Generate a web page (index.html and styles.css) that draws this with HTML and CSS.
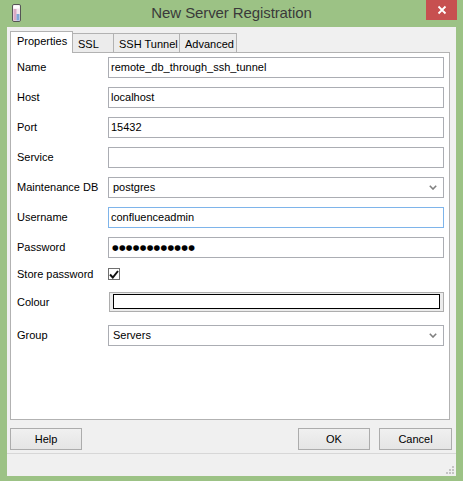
FILE: index.html
```html
<!DOCTYPE html>
<html>
<head>
<meta charset="utf-8">
<title>New Server Registration</title>
<link rel="stylesheet" href="styles.css">
</head>
<body>
<div class="window">
  <div class="titlebar">
    <div class="app-icon">
      <svg width="9" height="18" viewBox="0 0 9 18">
        <rect x="0.5" y="0.5" width="8" height="17" rx="1.5" fill="#f2e6ee" stroke="#555"/>
        <rect x="1.5" y="1.5" width="6" height="3" fill="#fff"/>
        <rect x="1.5" y="5" width="3" height="11.5" fill="#d9a9c4"/>
        <rect x="4.5" y="10" width="3" height="6.5" fill="#7fa6d6"/>
      </svg>
    </div>
    <div class="title">New Server Registration</div>
    <div class="close">
      <svg width="10" height="10" viewBox="0 0 10 10"><path d="M1.5 1.5 L8.5 8.5 M8.5 1.5 L1.5 8.5" stroke="#fff" stroke-width="1.8"/></svg>
    </div>
  </div>
  <div class="client">
    <div class="tabs">
      <div class="tab active tab-props">Properties</div>
      <div class="tab tab-ssl">SSL</div>
      <div class="tab tab-ssh">SSH Tunnel</div>
      <div class="tab tab-adv">Advanced</div>
    </div>
    <div class="panel">
      <div class="row">
        <label class="label">Name</label>
        <div class="field">remote_db_through_ssh_tunnel</div>
      </div>
      <div class="row">
        <label class="label">Host</label>
        <div class="field">localhost</div>
      </div>
      <div class="row">
        <label class="label">Port</label>
        <div class="field">15432</div>
      </div>
      <div class="row">
        <label class="label">Service</label>
        <div class="field"></div>
      </div>
      <div class="row">
        <label class="label">Maintenance DB</label>
        <div class="field select"><span>postgres</span>
          <svg class="chev" width="8" height="5" viewBox="0 0 8 5"><path d="M0.8 0.8 L4 4 L7.2 0.8" fill="none" stroke="#808080" stroke-width="1.6"/></svg>
        </div>
      </div>
      <div class="row">
        <label class="label">Username</label>
        <div class="field focused">confluenceadmin</div>
      </div>
      <div class="row">
        <label class="label">Password</label>
        <div class="field"><span class="dots">●●●●●●●●●●●●</span></div>
      </div>
      <div class="row row-check">
        <label class="label">Store password</label>
        <div class="checkbox">
          <svg width="10" height="9" viewBox="0 0 10 9"><path d="M1 4.5 L3.8 7.5 L9 1" fill="none" stroke="#111" stroke-width="2"/></svg>
        </div>
      </div>
      <div class="row row-colour">
        <label class="label">Colour</label>
        <div class="colour"><div class="swatch"></div></div>
      </div>
      <div class="row row-group">
        <label class="label">Group</label>
        <div class="field select"><span>Servers</span>
          <svg class="chev" width="8" height="5" viewBox="0 0 8 5"><path d="M0.8 0.8 L4 4 L7.2 0.8" fill="none" stroke="#808080" stroke-width="1.6"/></svg>
        </div>
      </div>
    </div>
    <div class="buttons">
      <button class="btn">Help</button>
      <div class="spacer"></div>
      <button class="btn">OK</button>
      <button class="btn btn-cancel">Cancel</button>
    </div>
    <div class="separator"></div>
    <div class="statusbar">
      <svg class="grip" width="9" height="9" viewBox="0 0 9 9">
        <rect x="7" y="1" width="2" height="2" fill="#c4c4c4"/>
        <rect x="4" y="4" width="2" height="2" fill="#c4c4c4"/>
        <rect x="7" y="4" width="2" height="2" fill="#c4c4c4"/>
        <rect x="1" y="7" width="2" height="2" fill="#c4c4c4"/>
        <rect x="4" y="7" width="2" height="2" fill="#c4c4c4"/>
        <rect x="7" y="7" width="2" height="2" fill="#c4c4c4"/>
      </svg>
    </div>
  </div>
</div>
</body>
</html>
```
FILE: styles.css
```css
* { box-sizing: border-box; }
html, body { margin: 0; padding: 0; }
body {
  background: #9cc285;
  font-family: "Liberation Sans", Arial, sans-serif;
  font-size: 11px;
  color: #000;
}
.window {
  width: 463px;
  height: 481px;
  display: flex;
  flex-direction: column;
}
.titlebar {
  height: 27px;
  display: grid;
  grid-template-columns: 1fr auto 1fr;
  align-items: start;
}
.app-icon {
  justify-self: start;
  margin: 4px 0 0 12px;
  height: 18px;
}
.app-icon svg { display: block; }
.title {
  font-size: 15px;
  line-height: 20px;
  padding-top: 3px;
  color: #3a3a3a;
  letter-spacing: -0.1px;
}
.close {
  justify-self: end;
  margin-right: 6px;
  width: 31px;
  height: 20px;
  background: #c75050;
  display: flex;
  align-items: center;
  justify-content: center;
}
.close svg { display: block; }
.client {
  flex: 1;
  margin: 0 7px 5px 7px;
  background: #f0f0f0;
  display: flex;
  flex-direction: column;
  padding: 4px 6px 0 3px;
}
.tabs {
  display: flex;
  align-items: flex-end;
  height: 21px;
  position: relative;
  z-index: 1;
}
.tab {
  height: 19px;
  border: 1px solid #b2b2b2;
  border-bottom: none;
  background: #ececec;
  padding: 4px 0 0 5px;
  line-height: 13px;
  white-space: nowrap;
}
.tab + .tab { border-left: none; }
.tab.active {
  height: 22px;
  margin-bottom: -1px;
  background: #fff;
  padding: 3px 0 0 6px;
}
.tab-props { width: 63px; }
.tab-ssl { width: 41px; }
.tab-ssh { width: 66px; }
.tab-adv { width: 57px; }
.panel {
  height: 368px;
  background: #fff;
  border: 1px solid #b2b2b2;
  padding: 4px 5px 0 6px;
  display: flex;
  flex-direction: column;
  gap: 9px;
}
.row {
  display: flex;
  align-items: center;
  height: 21px;
}
.label {
  width: 91px;
  flex: none;
  line-height: 13px;
}
.field {
  flex: 1;
  height: 21px;
  border: 1px solid #abadb3;
  background: #fff;
  padding: 0 2px;
  line-height: 19px;
  display: flex;
  align-items: center;
  white-space: nowrap;
}
.field.focused { border-color: #7eb4ea; }
.field.select { padding-left: 4px; }
.field.select span { flex: 1; }
.chev { display: block; margin-right: 4px; }
.dots {
  font-family: "DejaVu Sans", sans-serif;
  font-size: 7.6px;
  letter-spacing: 0.3px;
  padding-left: 1px;
}
.row-check { height: 16px; margin-top: -1px; }
.checkbox {
  width: 12px;
  height: 12px;
  border: 1px solid #6f6f6f;
  background: #fff;
  display: flex;
  align-items: center;
  justify-content: center;
}
.checkbox svg { display: block; }
.row-colour { height: 20px; margin-top: 1px; }
.colour {
  flex: 1;
  height: 20px;
  margin-left: 1px;
  border: 1px solid #adadad;
  background: #ececec;
  padding: 1px 3px 2px 3px;
}
.swatch {
  height: 100%;
  border: 1px solid #000;
  background: #fff;
}
.row-group { margin-top: 4px; }
.buttons {
  display: flex;
  margin-top: 8px;
  gap: 9px;
  margin-right: -2px;
}
.spacer { flex: 1; }
.btn {
  width: 72px;
  height: 22px;
  border: 1px solid #acacac;
  background: linear-gradient(#f0f0f0, #e5e5e5);
  font-family: "Liberation Sans", Arial, sans-serif;
  font-size: 11px;
  color: #000;
  padding: 0;
  margin: 0;
}
.btn-cancel { width: 73px; }
.separator {
  margin: 3px -6px 0 -3px;
  height: 1px;
  background: #d7d7d7;
}
.statusbar {
  flex: 1;
  display: flex;
  justify-content: flex-end;
  align-items: flex-end;
  margin-right: -4px;
  padding-bottom: 2px;
}
.grip { display: block; }
```
